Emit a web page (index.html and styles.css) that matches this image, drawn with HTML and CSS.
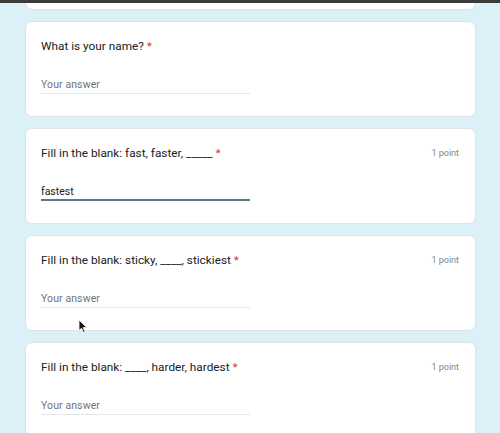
FILE: index.html
```html
<!DOCTYPE html>
<html>
<head>
<meta charset="utf-8">
<link rel="stylesheet" href="styles.css">
</head>
<body>
<div class="topbar"></div>
<main class="page">
  <div class="card card-cut"></div>

  <section class="card">
    <div class="qhead">
      <div class="qtitle">What is your name? <span class="req">*</span></div>
    </div>
    <div class="answer placeholder">Your answer</div>
  </section>

  <section class="card">
    <div class="qhead">
      <div class="qtitle">Fill in the blank: fast, faster, _____ <span class="req">*</span></div>
      <div class="points">1 point</div>
    </div>
    <div class="answer filled">fastest</div>
  </section>

  <section class="card">
    <div class="qhead">
      <div class="qtitle">Fill in the blank: sticky, ____, stickiest <span class="req">*</span></div>
      <div class="points">1 point</div>
    </div>
    <div class="answer placeholder">Your answer</div>
  </section>

  <section class="card">
    <div class="qhead">
      <div class="qtitle">Fill in the blank: ____, harder, hardest <span class="req">*</span></div>
      <div class="points">1 point</div>
    </div>
    <div class="answer placeholder">Your answer</div>
  </section>
</main>
<svg class="cursor" width="10" height="15" viewBox="0 0 10 15">
  <path d="M1 1 L1 11.5 L3.6 9.2 L5.4 13.4 L7 12.7 L5.2 8.6 L8.6 8.4 Z" fill="#111" stroke="#fff" stroke-width="0.8"/>
</svg>
</body>
</html>
```

FILE: styles.css
```css
html, body {
  margin: 0;
  padding: 0;
}
body {
  background: #dcf0f7;
  font-family: Roboto, "Noto Sans", Arial, sans-serif;
  color: #202124;
  height: 433px;
  overflow: hidden;
  position: relative;
}
.topbar {
  height: 3px;
  background: #3b3b3b;
}
.page {
  margin: 0 24px 0 25px;
  display: flex;
  flex-direction: column;
  gap: 11px;
}
.card {
  background: #fff;
  border: 1px solid #dfe3e6;
  border-radius: 7px;
  padding: 16px 16px 22px 15px;
}
.card-cut {
  height: 6px;
  padding: 0;
  border-top: none;
  border-radius: 0 0 7px 7px;
}
.qhead {
  display: flex;
  justify-content: space-between;
  align-items: center;
  height: 16px;
}
.qtitle {
  font-size: 11.8px;
  line-height: 16px;
}
.req {
  color: #d93025;
}
.points {
  font-size: 9px;
  color: #80868b;
}
.answer {
  margin-top: 23px;
  width: 209px;
  font-size: 10.5px;
  line-height: 16px;
  border-bottom: 1px solid #e4e6e8;
}
.placeholder {
  color: #70757a;
  letter-spacing: 0.1px;
}
.filled {
  color: #202124;
  border-bottom: 2px solid #5a7886;
  line-height: 15px;
}
.cursor {
  position: absolute;
  left: 78px;
  top: 319px;
}
```
